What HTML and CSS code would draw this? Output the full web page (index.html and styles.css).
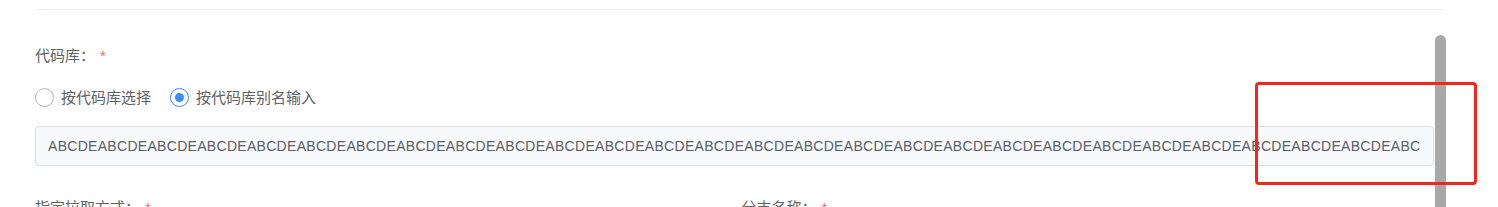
FILE: index.html
```html
<!DOCTYPE html>
<html lang="zh-CN">

<head>
    <meta charset="UTF-8">
    <meta name="viewport" content="width=device-width, initial-scale=1.0">
    <title>代码库配置</title>
    <link rel="stylesheet" href="styles.css">
</head>

<body>
    <div class="page">
        <div class="divider"></div>

        <form class="repo-form">
            <div class="form-item">
                <label class="form-label">代码库：<span class="required">*</span></label>
                <div class="radio-group">
                    <label class="radio">
                        <span class="radio-circle"></span>
                        <span class="radio-text">按代码库选择</span>
                    </label>
                    <label class="radio checked">
                        <span class="radio-circle"></span>
                        <span class="radio-text">按代码库别名输入</span>
                    </label>
                </div>
                <div class="text-input">ABCDEABCDEABCDEABCDEABCDEABCDEABCDEABCDEABCDEABCDEABCDEABCDEABCDEABCDEABCDEABCDEABCDEABCDEABCDEABCDEABCDEABCDEABCDEABCDEABCDEABCDEABCDEABC</div>
            </div>

            <div class="form-row">
                <label class="form-label">指定拉取方式：<span class="required">*</span></label>
                <label class="form-label">分支名称：<span class="required">*</span></label>
            </div>
        </form>

        <!-- scrollbar thumb and the annotation box sit over the form -->
        <div class="scroll-thumb"></div>
        <div class="mark-box"></div>
    </div>
</body>

</html>
```

FILE: styles.css
```css
body {
    margin: 0;
    padding: 0;
    background: #ffffff;
    font-family: "Noto Sans CJK SC", "Liberation Sans", sans-serif;
    color: #606266;
}

.page {
    position: relative;
    height: 207px;
    overflow: hidden;
    padding-left: 35px;
}

.divider {
    width: 1411px;
    height: 1px;
    background-color: #ebeef2;
    margin-top: 9px;
}

.repo-form {
    width: 1399px;
}

.form-item {
    display: flex;
    flex-direction: column;
}

.form-label {
    display: block;
    font-size: 15px;
    line-height: 20px;
    color: #606266;
}

.form-item .form-label {
    margin-top: 35px;
}

.required {
    color: #f56c6c;
    margin-left: 5px;
    font-family: "Liberation Sans", sans-serif;
}

.radio-group {
    display: flex;
    align-items: center;
    margin-top: 21px;
    height: 20px;
}

.radio {
    display: flex;
    align-items: center;
    margin-right: 19px;
    cursor: pointer;
}

.radio-circle {
    width: 17px;
    height: 17px;
    border: 1px solid #b3b6bc;
    border-radius: 50%;
    background: #fff;
    display: flex;
    justify-content: center;
    align-items: center;
}

.radio.checked .radio-circle {
    border-color: #3e8bfa;
}

.radio.checked .radio-circle::after {
    content: "";
    width: 9px;
    height: 9px;
    border-radius: 50%;
    background-color: #3e8bfa;
}

.radio-text {
    margin-left: 7px;
    font-size: 15px;
    line-height: 20px;
}

.text-input {
    margin-top: 19px;
    height: 38px;
    line-height: 38px;
    border: 1px solid #dcdfe6;
    border-radius: 4px;
    background-color: #f8f9fb;
    padding: 0 12px;
    font-family: "Liberation Sans", sans-serif;
    font-size: 14px;
    letter-spacing: 0.3px;
    white-space: nowrap;
    overflow: hidden;
    color: #5a5e66;
}

.form-row {
    display: grid;
    grid-template-columns: 1fr 1fr;
    column-gap: 14px;
    margin-top: 31px;
}

.scroll-thumb {
    position: absolute;
    left: 1435px;
    top: 35px;
    width: 11px;
    height: 200px;
    border-radius: 6px 6px 0 0;
    background-color: #a8a8a8;
}

.mark-box {
    position: absolute;
    left: 1255px;
    top: 82px;
    width: 216px;
    height: 97px;
    border: 3px solid #ff2218;
    border-radius: 4px;
}
```
